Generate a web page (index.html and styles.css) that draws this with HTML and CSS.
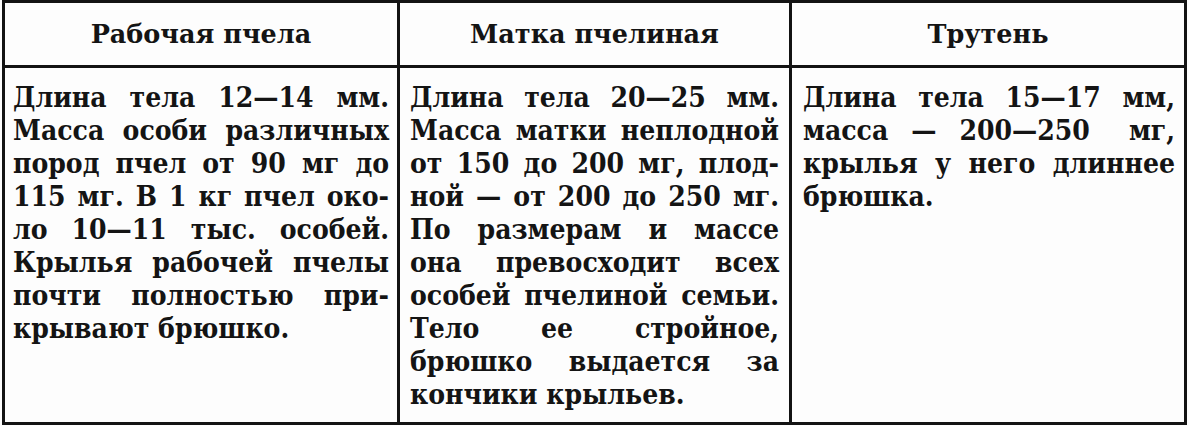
FILE: index.html
```html
<!DOCTYPE html>
<html lang="ru">
<head>
<meta charset="utf-8">
<link rel="stylesheet" href="styles.css">
</head>
<body>
<table class="bees">
  <colgroup>
    <col class="c1"><col class="c2"><col class="c3">
  </colgroup>
  <thead>
    <tr>
      <th>Рабочая пчела</th>
      <th>Матка пчелиная</th>
      <th>Трутень</th>
    </tr>
  </thead>
  <tbody>
    <tr>
      <td class="p1">
        <div class="ln">Длина тела 12—14 мм.</div>
        <div class="ln">Масса особи различных</div>
        <div class="ln">пород пчел от 90 мг до</div>
        <div class="ln">115 мг. В 1 кг пчел око-</div>
        <div class="ln">ло 10—11 тыс. особей.</div>
        <div class="ln">Крылья рабочей пчелы</div>
        <div class="ln">почти полностью при-</div>
        <div class="ln end">крывают брюшко.</div>
      </td>
      <td class="p2">
        <div class="ln">Длина тела 20—25 мм.</div>
        <div class="ln">Масса матки неплодной</div>
        <div class="ln">от 150 до 200 мг, плод-</div>
        <div class="ln">ной — от 200 до 250 мг.</div>
        <div class="ln">По размерам и массе</div>
        <div class="ln">она превосходит всех</div>
        <div class="ln">особей пчелиной семьи.</div>
        <div class="ln">Тело ее стройное,</div>
        <div class="ln">брюшко выдается за</div>
        <div class="ln end">кончики крыльев.</div>
      </td>
      <td class="p3">
        <div class="ln">Длина тела 15—17 мм,</div>
        <div class="ln">масса — 200—250<span class="gap"></span> мг,</div>
        <div class="ln">крылья у него длиннее</div>
        <div class="ln end">брюшка.</div>
      </td>
    </tr>
  </tbody>
</table>
</body>
</html>
```

FILE: styles.css
```css
html, body {
  margin: 0;
  padding: 0;
  background: #fdfdfd;
}
body {
  width: 1189px;
  height: 426px;
  overflow: hidden;
}
.bees {
  margin-left: 2px;
  width: 1185px;
  height: 425px;
  border-collapse: collapse;
  table-layout: fixed;
  color: #141414;
  border: 3px solid #131313;
}
.c1 { width: 395px; }
.c2 { width: 392px; }
.c3 { width: 395px; }
.bees th, .bees td {
  border: 3px solid #131313;
  padding: 0;
}
.bees th {
  height: 62px;
  font-family: "DejaVu Serif", serif;
  font-weight: bold;
  font-size: 25.5px;
  text-align: center;
  vertical-align: middle;
}
.bees td {
  vertical-align: top;
  font-family: "DejaVu Serif Condensed", "DejaVu Serif", serif;
  font-weight: bold;
  font-size: 28px;
  line-height: 33px;
  padding-top: 13px;
}
.bees td.p1 { padding-left: 8px; padding-right: 8px; }
.bees td.p2 { padding-left: 10px; padding-right: 10px; }
.bees td.p3 { padding-left: 11px; padding-right: 9px; }
.ln {
  text-align: justify;
  text-align-last: justify;
  white-space: nowrap;
}
.ln.end {
  text-align-last: left;
}
.gap {
  display: inline-block;
  width: 16px;
}
```
